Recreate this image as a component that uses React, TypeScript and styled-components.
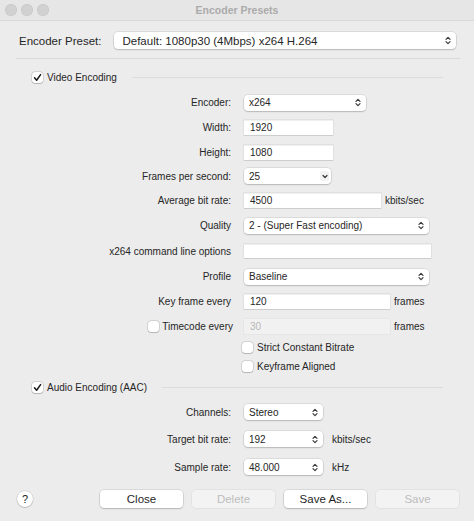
import React from 'react'
import styled, { createGlobalStyle } from 'styled-components'

const GlobalStyle = createGlobalStyle`
  html, body {
    margin: 0;
    padding: 0;
    background: #ececec;
  }
  body {
    font-family: "Liberation Sans", Arial, sans-serif;
    color: #262626;
  }
`

const Chevrons = () => (
  <svg width="6" height="9" viewBox="0 0 6 9">
    <path d="M1 3.4 L3 1.4 L5 3.4 M1 5.6 L3 7.6 L5 5.6" fill="none" stroke="#3a3a3a" strokeWidth="1.2" strokeLinecap="round" strokeLinejoin="round" />
  </svg>
)

const DownArrow = () => (
  <svg width="6" height="5" viewBox="0 0 6 5">
    <path d="M1 1.5 L3 3.5 L5 1.5" fill="none" stroke="#3a3a3a" strokeWidth="1.2" strokeLinecap="round" strokeLinejoin="round" />
  </svg>
)

const Tick = () => (
  <svg width="9" height="9" viewBox="0 0 9 9">
    <path d="M1.5 4.8 L3.6 7.2 L7.6 1.6" fill="none" stroke="#1a1a1a" strokeWidth="1.5" strokeLinecap="round" strokeLinejoin="round" />
  </svg>
)

const Window = styled.div`
  width: 474px;
  height: 521px;
  background: #ececec;
  overflow: hidden;
  display: flex;
  flex-direction: column;
`

const TitleBar = styled.div`
  height: 20px;
  flex-shrink: 0;
  display: grid;
  grid-template-columns: 1fr auto 1fr;
  align-items: center;
  background: #e6e6e6;
  border-bottom: 1px solid #d8d8d8;
`

const Lights = styled.div`
  display: flex;
  gap: 4px;
  padding-left: 5px;
`

const Light = styled.span`
  width: 12px;
  height: 12px;
  border-radius: 50%;
  background: #d1d1d1;
  box-shadow: inset 0 0 0 0.5px rgba(0, 0, 0, 0.08);
`

const Title = styled.div`
  font-size: 10.5px;
  font-weight: bold;
  color: #ababab;
`

const PresetRow = styled.div`
  display: flex;
  align-items: center;
  height: 17px;
  margin-top: 11px;
  padding: 0 18px 0 19px;
  gap: 13px;
  font-size: 11.5px;
`

const Divider = styled.div`
  height: 1px;
  background: #d9d9d9;
  margin: 9px 14px 0 16px;
`

const SectionHeader = styled.div<{ $h: number; $top?: number }>`
  height: ${(p) => p.$h}px;
  margin-top: ${(p) => p.$top || 0}px;
  display: flex;
  align-items: center;
  padding: 0 31px 0 32px;
  font-size: 10px;
`

const HeaderLine = styled.div`
  flex: 1;
  height: 1px;
  background: #dcdcdc;
  margin-left: 15px;
`

const Row = styled.div<{ $h: number; $top?: number }>`
  height: ${(p) => p.$h}px;
  margin-top: ${(p) => p.$top || 0}px;
  display: grid;
  grid-template-columns: 231px 1fr;
  column-gap: 13px;
  align-items: center;
  font-size: 10px;
`

const Label = styled.div<{ $pull?: number }>`
  display: flex;
  justify-content: flex-end;
  align-items: center;
  gap: 3px;
  margin-right: ${(p) => -(p.$pull || 0)}px;
  white-space: nowrap;
`

const Cell = styled.div<{ $shift?: number }>`
  display: flex;
  align-items: center;
  gap: 4px;
  margin-left: ${(p) => p.$shift || 0}px;
  white-space: nowrap;
`

const Unit = styled.span<{ $gap?: number }>`
  margin-left: ${(p) => p.$gap || 0}px;
`

const PopUp = styled.div<{ $w: number; $h?: number; $size?: number; $combo?: boolean }>`
  width: ${(p) => p.$w}px;
  height: ${(p) => p.$h || 16}px;
  box-sizing: border-box;
  display: flex;
  align-items: center;
  justify-content: space-between;
  padding: 0 ${(p) => (p.$combo ? 2 : 5)}px 0 ${(p) => (p.$size ? 8 : 5)}px;
  background: #fff;
  border-radius: 4px;
  font-size: ${(p) => p.$size || 10}px;
  box-shadow: 0 0 0 0.5px rgba(0, 0, 0, 0.14), 0 1px 1.5px rgba(0, 0, 0, 0.16);
  ${(p) => (p.$size ? 'flex: 1;' : '')}
`

const ArrowBox = styled.span`
  display: flex;
  align-items: center;
  justify-content: center;
  width: 9px;
  height: 10px;
  border-radius: 2px;
  background: #f3f3f3;
`

const Field = styled.div<{ $w: number; $off?: boolean; $h?: number }>`
  width: ${(p) => p.$w}px;
  height: ${(p) => p.$h || 15}px;
  box-sizing: border-box;
  display: flex;
  align-items: center;
  padding-left: 6px;
  background: ${(p) => (p.$off ? '#f1f1f1' : '#fff')};
  color: ${(p) => (p.$off ? '#b8b8b8' : '#262626')};
  box-shadow: ${(p) =>
    p.$off
      ? '0 0 0 0.5px rgba(0,0,0,0.05)'
      : 'inset 0 0.5px 0 rgba(0,0,0,0.12), 0 0 0 0.5px rgba(0,0,0,0.1), 0 0.5px 0.5px rgba(0,0,0,0.08)'};
`

const Box = styled.span`
  width: 11px;
  height: 11px;
  flex-shrink: 0;
  display: inline-flex;
  align-items: center;
  justify-content: center;
  background: #fff;
  border-radius: 3px;
  box-shadow: 0 0 0 0.5px rgba(0, 0, 0, 0.2), 0 0.5px 1px rgba(0, 0, 0, 0.15);
`

const Check = styled.span`
  display: inline-flex;
  align-items: center;
  gap: 4px;
`

const Buttons = styled.div`
  display: flex;
  align-items: center;
  height: 18px;
  margin-top: 8px;
  padding-left: 17px;
`

const Help = styled.div`
  width: 16px;
  height: 16px;
  border-radius: 50%;
  background: #fff;
  display: flex;
  align-items: center;
  justify-content: center;
  font-size: 11px;
  color: #222;
  box-shadow: 0 0 0 0.5px rgba(0, 0, 0, 0.18), 0 1px 1px rgba(0, 0, 0, 0.15);
  margin-right: 67px;
`

const ButtonGroup = styled.div`
  display: flex;
  gap: 9px;
`

const Button = styled.div<{ $off?: boolean }>`
  width: 83px;
  height: 18px;
  border-radius: 4px;
  display: flex;
  align-items: center;
  justify-content: center;
  font-size: 11.5px;
  background: ${(p) => (p.$off ? '#f3f3f3' : '#fff')};
  color: ${(p) => (p.$off ? '#bdbdbd' : '#1f1f1f')};
  box-shadow: ${(p) =>
    p.$off
      ? '0 0 0 0.5px rgba(0,0,0,0.08)'
      : '0 0 0 0.5px rgba(0,0,0,0.16), 0 1px 1.5px rgba(0,0,0,0.16)'};
`

const App = () => {
  return (
    <Window>
      <GlobalStyle />
      <TitleBar>
        <Lights>
          <Light />
          <Light />
          <Light />
        </Lights>
        <Title>Encoder Presets</Title>
        <div />
      </TitleBar>

      <PresetRow>
        <span>Encoder Preset:</span>
        <PopUp $w={343} $h={17} $size={11.5}>
          <span>Default: 1080p30 (4Mbps) x264 H.264</span>
          <Chevrons />
        </PopUp>
      </PresetRow>
      <Divider />

      <SectionHeader $h={21} $top={8}>
        <Check>
          <Box><Tick /></Box>
          Video Encoding
        </Check>
        <HeaderLine />
      </SectionHeader>

      <Row $h={25} $top={2}>
        <Label>Encoder:</Label>
        <Cell>
          <PopUp $w={122}>
            <span>x264</span>
            <Chevrons />
          </PopUp>
        </Cell>
      </Row>
      <Row $h={25}>
        <Label>Width:</Label>
        <Cell><Field $w={89}>1920</Field></Cell>
      </Row>
      <Row $h={24}>
        <Label>Height:</Label>
        <Cell><Field $w={89}>1080</Field></Cell>
      </Row>
      <Row $h={24}>
        <Label>Frames per second:</Label>
        <Cell>
          <PopUp $w={87} $combo>
            <span>25</span>
            <ArrowBox><DownArrow /></ArrowBox>
          </PopUp>
        </Cell>
      </Row>
      <Row $h={25}>
        <Label>Average bit rate:</Label>
        <Cell>
          <Field $w={137}>4500</Field>
          <Unit>kbits/sec</Unit>
        </Cell>
      </Row>
      <Row $h={25}>
        <Label>Quality</Label>
        <Cell>
          <PopUp $w={185}>
            <span>2 - (Super Fast encoding)</span>
            <Chevrons />
          </PopUp>
        </Cell>
      </Row>
      <Row $h={26}>
        <Label>x264 command line options</Label>
        <Cell><Field $w={187} $h={14} /></Cell>
      </Row>
      <Row $h={25}>
        <Label>Profile</Label>
        <Cell>
          <PopUp $w={185}>
            <span>Baseline</span>
            <Chevrons />
          </PopUp>
        </Cell>
      </Row>
      <Row $h={25}>
        <Label>Key frame every</Label>
        <Cell>
          <Field $w={146}>120</Field>
          <Unit>frames</Unit>
        </Cell>
      </Row>
      <Row $h={24}>
        <Label $pull={2}>
          <Box />
          <span>Timecode every</span>
        </Label>
        <Cell>
          <Field $w={146} $off>30</Field>
          <Unit>frames</Unit>
        </Cell>
      </Row>
      <Row $h={18}>
        <span />
        <Cell $shift={-2}>
          <Check><Box />Strict Constant Bitrate</Check>
        </Cell>
      </Row>
      <Row $h={20}>
        <span />
        <Cell $shift={-2}>
          <Check><Box />Keyframe Aligned</Check>
        </Cell>
      </Row>

      <SectionHeader $h={22}>
        <Check>
          <Box><Tick /></Box>
          Audio Encoding (AAC)
        </Check>
        <HeaderLine />
      </SectionHeader>

      <Row $h={28}>
        <Label>Channels:</Label>
        <Cell>
          <PopUp $w={79}>
            <span>Stereo</span>
            <Chevrons />
          </PopUp>
        </Cell>
      </Row>
      <Row $h={26}>
        <Label>Target bit rate:</Label>
        <Cell>
          <PopUp $w={79}>
            <span>192</span>
            <Chevrons />
          </PopUp>
          <Unit $gap={5}>kbits/sec</Unit>
        </Cell>
      </Row>
      <Row $h={30}>
        <Label>Sample rate:</Label>
        <Cell>
          <PopUp $w={79}>
            <span>48.000</span>
            <Chevrons />
          </PopUp>
          <Unit $gap={5}>kHz</Unit>
        </Cell>
      </Row>

      <Buttons>
        <Help>?</Help>
        <ButtonGroup>
          <Button>Close</Button>
          <Button $off>Delete</Button>
          <Button>Save As...</Button>
          <Button $off>Save</Button>
        </ButtonGroup>
      </Buttons>
    </Window>
  )
}

export default App
